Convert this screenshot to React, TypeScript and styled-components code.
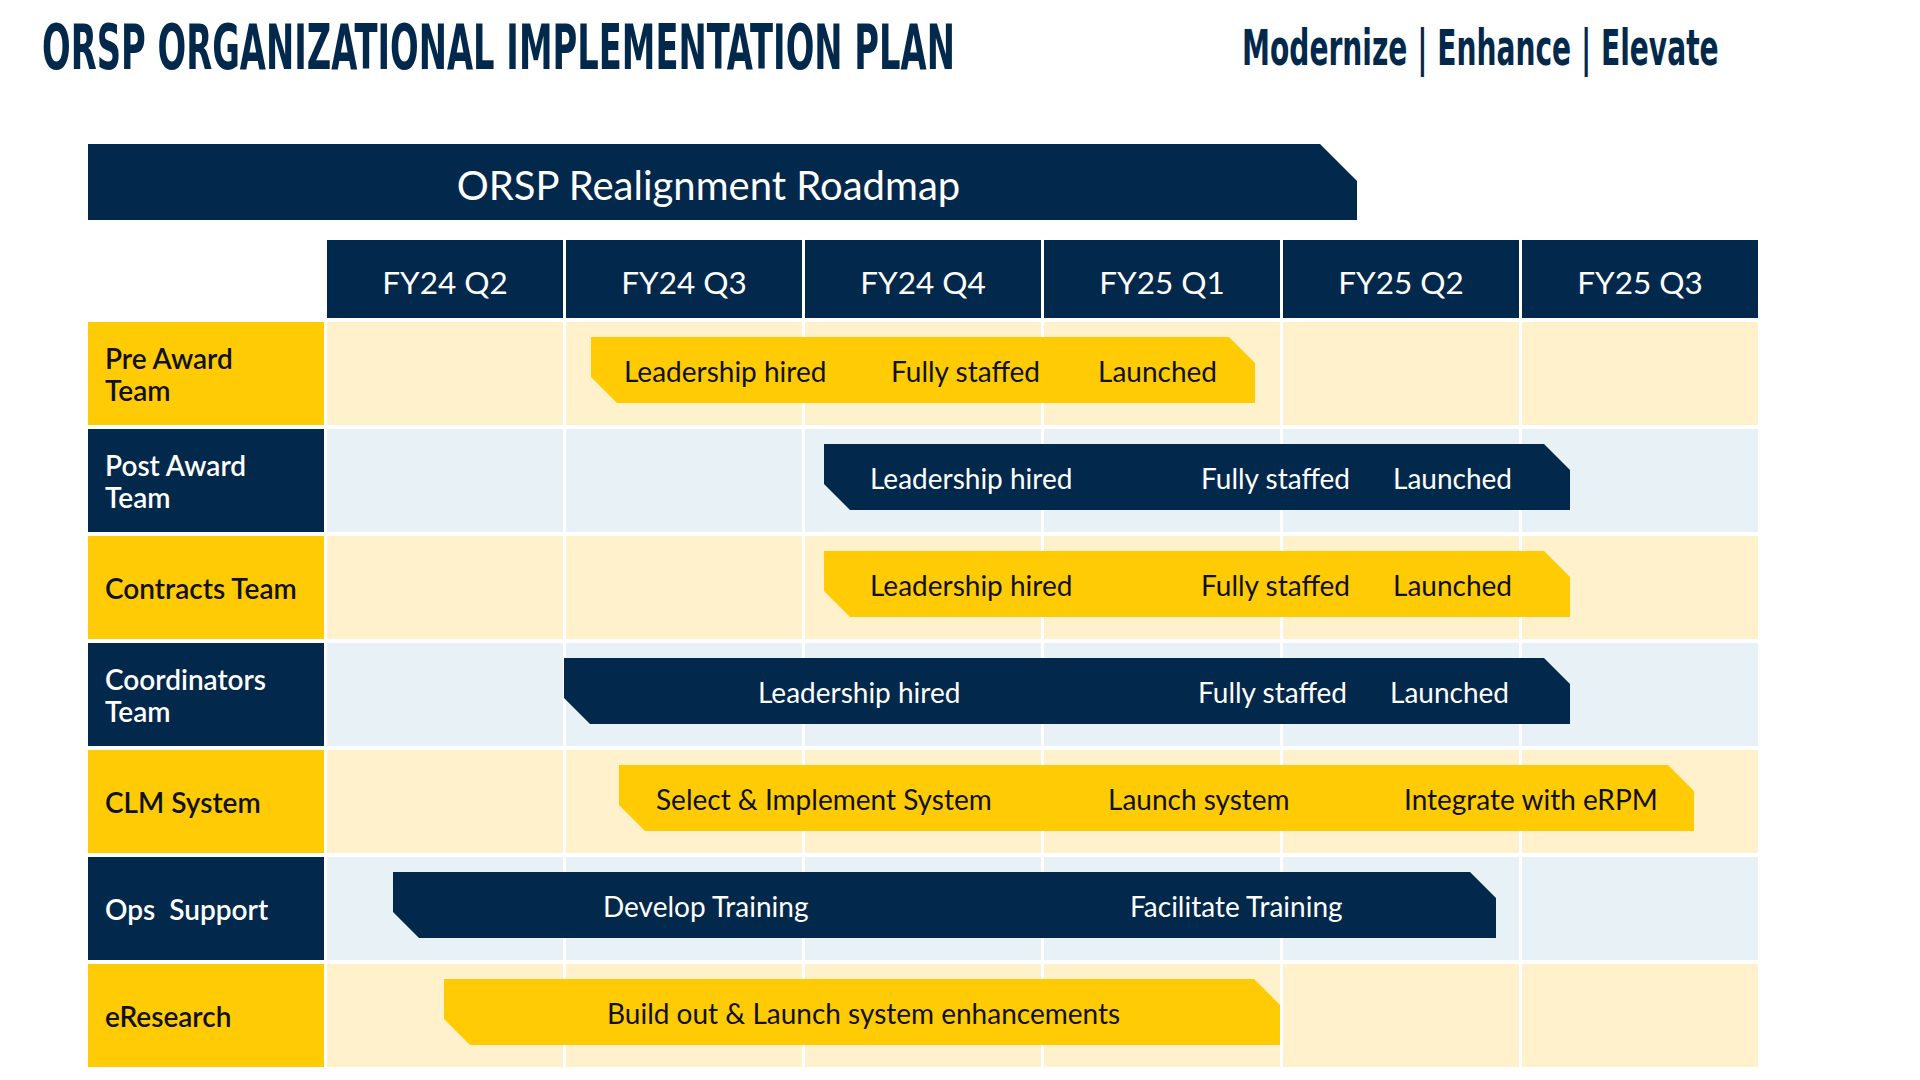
import React from "react";
import styled, { createGlobalStyle } from "styled-components";

const NAVY = "#02284b";
const YELLOW = "#ffcb05";
const LY = "#fff1cc";
const LB = "#e8f1f5";

const Global = createGlobalStyle`
  html, body { margin: 0; background: #fff; }
  body { font-family: Lato, "Noto Sans", sans-serif; }
`;

const Page = styled.div`
  width: 1920px; height: 1080px; overflow: hidden; position: relative;
`;
const Top = styled.div`
  display: flex; align-items: flex-start; padding: 16px 0 0 42px; height: 130px; box-sizing: border-box;
`;
const Title = styled.h1`
  margin: 0; font-family: "DejaVu Sans Condensed", "Liberation Sans Narrow", sans-serif;
  font-weight: 700; font-size: 56px; line-height: 1; color: ${NAVY}; white-space: nowrap;
  width: 1200px; transform: scale(0.67, 1.12); transform-origin: top left;
`;
const Tag = styled.div`
  font-family: "DejaVu Sans Condensed", "Liberation Sans Narrow", sans-serif; white-space: nowrap;
  font-weight: 700; font-size: 44px; line-height: 1; color: ${NAVY}; margin-top: 6px;
  transform: scale(0.71, 1.15); transform-origin: top left;
`;
const Body = styled.div`
  padding-left: 88px;
`;
const Banner = styled.div`
  width: 1269px; height: 76px; background: ${NAVY}; color: #fff;
  display: flex; align-items: center; justify-content: center; padding: 6px 28px 0 0; box-sizing: border-box;
  font-size: 40px; clip-path: polygon(0 0, calc(100% - 37px) 0, 100% 37px, 100% 100%, 0 100%);
  margin-top: 14px;
`;
const Grid = styled.div`
  margin-top: 20px; position: relative;
  display: grid; grid-template-columns: 236px repeat(6, 236px);
  grid-template-rows: 78px repeat(7, 103px); column-gap: 3px; row-gap: 4px;
`;
const Blank = styled.div``;
const Head = styled.div`
  background: ${NAVY}; color: #fff; font-size: 31.5px; display: flex; align-items: center; justify-content: center; padding-top: 6px;
`;
const Label = styled.div<{ $y: boolean }>`
  background: ${(p) => (p.$y ? YELLOW : NAVY)}; color: ${(p) => (p.$y ? "#111" : "#fff")};
  font-size: 28px; font-weight: 600; line-height: 32px; display: flex; align-items: center; padding-left: 17px; white-space: pre;
`;
const Cell = styled.div<{ $y: boolean }>`
  background: ${(p) => (p.$y ? LY : LB)};
`;
const Bar = styled.div<{ $y: boolean }>`
  position: absolute; height: 66px; background: ${(p) => (p.$y ? YELLOW : NAVY)};
  color: ${(p) => (p.$y ? "#111" : "#fff")}; font-size: 28px; display: flex; align-items: center; padding-top: 2px; box-sizing: border-box;
  clip-path: polygon(0 0, calc(100% - 26px) 0, 100% 26px, 100% 100%, 26px 100%, 0 calc(100% - 26px));
`;
const BarText = styled.span`
  position: absolute; white-space: nowrap;
`;

const quarters = ["FY24 Q2", "FY24 Q3", "FY24 Q4", "FY25 Q1", "FY25 Q2", "FY25 Q3"];
const rows = [
  { l: "Pre Award\nTeam", x: 591, w: 664, t: [[624, "Leadership hired"], [891, "Fully staffed"], [1098, "Launched"]] },
  { l: "Post Award\nTeam", x: 824, w: 746, t: [[870, "Leadership hired"], [1201, "Fully staffed"], [1393, "Launched"]] },
  { l: "Contracts Team", x: 824, w: 746, t: [[870, "Leadership hired"], [1201, "Fully staffed"], [1393, "Launched"]] },
  { l: "Coordinators\nTeam", x: 564, w: 1006, t: [[758, "Leadership hired"], [1198, "Fully staffed"], [1390, "Launched"]] },
  { l: "CLM System", x: 619, w: 1075, t: [[656, "Select & Implement System"], [1108, "Launch system"], [1404, "Integrate with eRPM"]] },
  { l: "Ops  Support", x: 393, w: 1103, t: [[603, "Develop Training"], [1130, "Facilitate Training"]] },
  { l: "eResearch", x: 444, w: 836, t: [[607, "Build out & Launch system enhancements"]] },
] as { l: string; x: number; w: number; t: [number, string][] }[];

export default function App() {
  return (
    <Page>
      <Global />
      <Top>
        <Title>ORSP ORGANIZATIONAL IMPLEMENTATION PLAN</Title>
        <Tag>Modernize | Enhance | Elevate</Tag>
      </Top>
      <Body>
        <Banner>ORSP Realignment Roadmap</Banner>
        <Grid>
          <Blank />
          {quarters.map((q) => <Head key={q}>{q}</Head>)}
          {rows.map((r, i) => (
            <React.Fragment key={i}>
              <Label $y={i % 2 === 0}>{r.l}</Label>
              {quarters.map((q) => <Cell key={q} $y={i % 2 === 0} />)}
            </React.Fragment>
          ))}
          {rows.map((r, i) => (
            <Bar key={"b" + i} $y={i % 2 === 0} style={{ left: r.x - 88, width: r.w, top: 82 + i * 107 + 15 }}>
              {r.t.map(([x, s]) => (
                <BarText key={s} style={{ left: x - r.x }}>{s}</BarText>
              ))}
            </Bar>
          ))}
        </Grid>
      </Body>
    </Page>
  );
}
